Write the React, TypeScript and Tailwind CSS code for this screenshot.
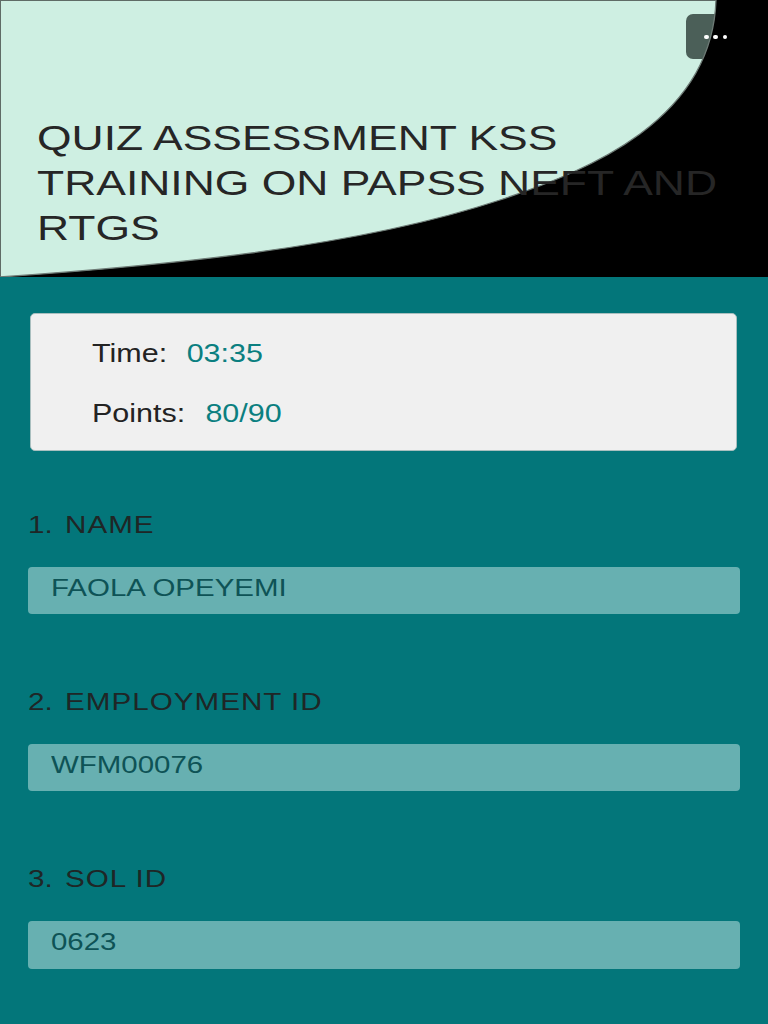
import React from "react";

const questions = [
  { n: "1.", label: "NAME", value: "FAOLA OPEYEMI" },
  { n: "2.", label: "EMPLOYMENT ID", value: "WFM00076" },
  { n: "3.", label: "SOL ID", value: "0623" },
];

export default function App() {
  return (
    <div className="min-h-[1024px] w-full bg-[#03767a] font-['Liberation_Sans',Arial,sans-serif] overflow-hidden">
      {/* Header */}
      <header className="relative h-[277px] bg-[#ceefe2] shadow-[inset_1px_1px_0_#5f6b66] overflow-hidden">
        <div className="absolute left-[686px] top-[14px] w-[60px] h-[45px] rounded-[7px] bg-[#4b5f58]" />
        <svg
          className="absolute inset-0"
          width="768"
          height="277"
          viewBox="0 0 768 277"
        >
          <path
            d="M716 0 H768 V277 H0 C150 266.5 350 249.5 500 200 C590 170 712 120 716 0 Z"
            fill="#000000"
          />
          <path
            d="M0 277 C150 266.5 350 249.5 500 200 C590 170 712 120 716 0"
            fill="none"
            stroke="#6d7a75"
            strokeWidth="1.3"
          />
        </svg>
        <div className="relative z-10 pt-[114.5px] pl-[37px]">
          <h1 className="text-[35px] leading-[45px] font-normal text-[#262626] origin-left scale-x-[1.27] whitespace-nowrap">
            <div>QUIZ ASSESSMENT KSS</div>
            <div>TRAINING ON PAPSS NEFT AND</div>
            <div>RTGS</div>
          </h1>
        </div>
        <button className="absolute z-20 left-[704.3px] top-[34.7px] flex gap-[4.6px]">
          <span className="block w-[4.6px] h-[4.6px] rounded-full bg-white" />
          <span className="block w-[4.6px] h-[4.6px] rounded-full bg-white" />
          <span className="block w-[4.6px] h-[4.6px] rounded-full bg-white" />
        </button>
      </header>

      {/* Stats card */}
      <div className="mt-[36px] ml-[30px] mr-[31px] rounded-[5px] border border-[#a9bfbf] bg-[#f0f0f0] pt-[23.5px] pb-[22.5px] pl-[61px]">
        <div className="flex h-[30px] text-[25px] leading-[30px] origin-left scale-x-[1.22] whitespace-nowrap">
          <span className="text-[#232323]">Time:</span>
          <span className="ml-[16px] text-[#0b7f80]">03:35</span>
        </div>
        <div className="mt-[30px] flex h-[30px] text-[25px] leading-[30px] origin-left scale-x-[1.22] whitespace-nowrap">
          <span className="text-[#232323]">Points:</span>
          <span className="ml-[16.5px] text-[#0b7f80]">80/90</span>
        </div>
      </div>

      {/* Questions */}
      <div className="mt-[59.7px] px-[28px] flex flex-col gap-[73.7px]">
        {questions.map((q) => (
          <div key={q.n} className="flex flex-col">
            <div className="flex h-[28px] text-[23.5px] leading-[28px] text-[#1f2626] origin-left scale-x-[1.26] whitespace-nowrap">
              <span className="w-[29.4px]">{q.n}</span>
              <span className="tracking-[0.8px]">{q.label}</span>
            </div>
            <div className="mt-[28px] h-[47.5px] rounded-[4px] bg-[#67b0b1] pl-[23px] w-[712px]">
              <div className="text-[23px] leading-[43px] text-[#0e5356] origin-left scale-x-[1.28] whitespace-nowrap">
                {q.value}
              </div>
            </div>
          </div>
        ))}
      </div>
    </div>
  );
}
